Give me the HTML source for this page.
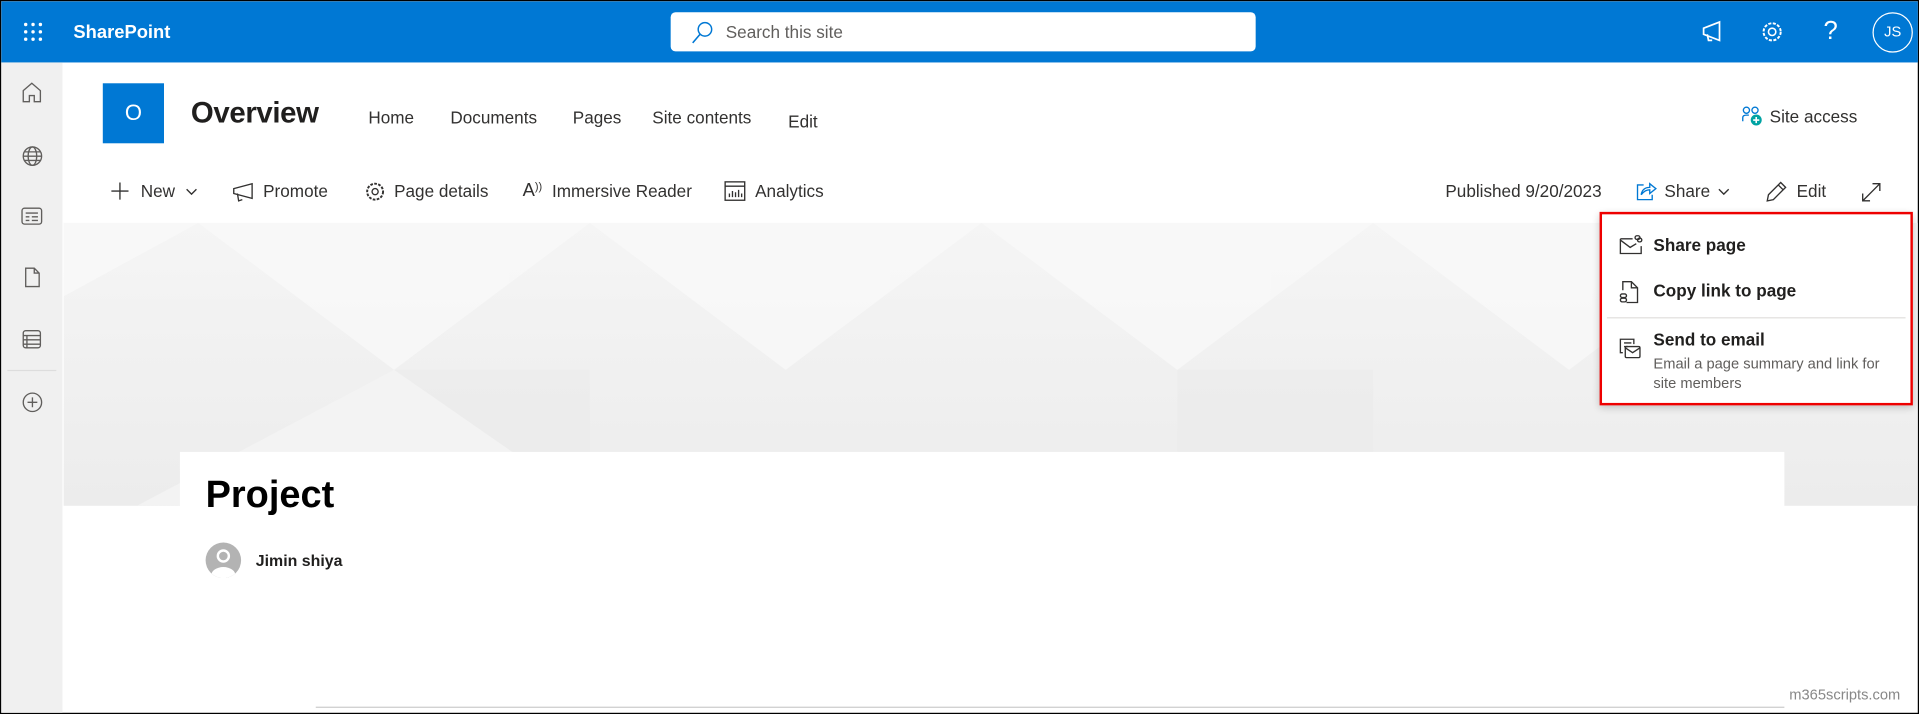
<!DOCTYPE html>
<html><head><meta charset="utf-8"><style>
*{margin:0;padding:0;box-sizing:border-box}
html,body{width:1919px;height:714px;overflow:hidden;background:#000}
#w{position:absolute;left:0;top:0;width:1568px;height:583px;transform:scale(1.22385,1.2247);transform-origin:0 0;background:#fff;font-family:"Liberation Sans",sans-serif;color:#323130;overflow:hidden;border:1px solid #000}
.a{position:absolute;white-space:nowrap}
svg{position:absolute;overflow:visible}
.ic{fill:none;stroke:#323130;stroke-width:1.1}
.ri{fill:none;stroke:#605e5c;stroke-width:1.1}
</style></head><body><div id="w">
<div class="a" style="left:0;top:0;width:1568px;height:50px;background:#0078d4"></div>
<svg style="left:18px;top:17px" width="16" height="16"><g fill="#fff"><circle cx="2" cy="2" r="1.4"/><circle cx="8" cy="2" r="1.4"/><circle cx="14" cy="2" r="1.4"/><circle cx="2" cy="8" r="1.4"/><circle cx="8" cy="8" r="1.4"/><circle cx="14" cy="8" r="1.4"/><circle cx="2" cy="14" r="1.4"/><circle cx="8" cy="14" r="1.4"/><circle cx="14" cy="14" r="1.4"/></g></svg>
<div class="a" style="left:59px;top:17px;color:#fff;font-weight:bold;font-size:15px">SharePoint</div>
<div class="a" style="left:547px;top:9px;width:478px;height:32px;background:#fff;border-radius:4px"></div>
<svg style="left:564px;top:17px" width="18" height="18"><circle cx="11" cy="6" r="5.5" fill="none" stroke="#0078d4" stroke-width="1.2"/><path d="M7 10 L1 17" stroke="#0078d4" stroke-width="1.3"/></svg>
<div class="a" style="left:592px;top:17px;color:#605e5c;font-size:14px">Search this site</div>
<svg style="left:1389px;top:16px" width="20" height="18"><path d="M2 6 L15 1 L15 16 L2 11 Z M5 11 L6 16 L9 16" fill="none" stroke="#fff" stroke-width="1.4"/></svg>
<svg style="left:1438px;top:16px" width="18" height="18"><circle cx="9" cy="9" r="3" fill="none" stroke="#fff" stroke-width="1.3"/><circle cx="9" cy="9" r="7" fill="none" stroke="#fff" stroke-width="1.6" stroke-dasharray="2.5 1.2"/></svg>
<div class="a" style="left:1489px;top:13px;color:#fff;font-size:21px">?</div>
<div class="a" style="left:1529px;top:9px;width:33px;height:33px;border:1.3px solid #fff;border-radius:50%;color:#fff;font-size:12px;text-align:center;line-height:31px">JS</div>
<div class="a" style="left:0;top:50px;width:50px;height:533px;background:#f0f0f0"></div>
<svg style="left:17px;top:66px" width="16" height="17"><path class="ri" d="M1 7 L8 1 L15 7 L15 16 L10 16 L10 11 L6 11 L6 16 L1 16 Z"/></svg>
<svg style="left:17px;top:118px" width="17" height="17"><g class="ri"><circle cx="8.5" cy="8.5" r="7.5"/><ellipse cx="8.5" cy="8.5" rx="3.5" ry="7.5"/><path d="M1 8.5 H16 M2 5 H15 M2 12 H15"/></g></svg>
<svg style="left:16px;top:168px" width="18" height="15"><g class="ri"><rect x="1" y="1" width="16" height="13" rx="2"/><path d="M4 5 H14 M4 8 H7 M9 8 H14 M4 11 H7 M9 11 H14"/></g></svg>
<svg style="left:19px;top:217px" width="13" height="17"><path class="ri" d="M1 1 H8 L12 5 V16 H1 Z M8 1 V5 H12"/></svg>
<svg style="left:17px;top:268px" width="16" height="16"><g class="ri"><rect x="1" y="1" width="14" height="14" rx="2"/><path d="M1 5 H15 M1 8.5 H15 M1 12 H15 M4 5 V15"/></g></svg>
<div class="a" style="left:5px;top:301px;width:40px;height:1px;background:#ddd"></div>
<svg style="left:17px;top:319px" width="17" height="17"><g class="ri"><circle cx="8.5" cy="8.5" r="7.5"/><path d="M8.5 4.5 V12.5 M4.5 8.5 H12.5"/></g></svg>
<div class="a" style="left:83px;top:67px;width:50px;height:49px;background:#0078d4;color:#fff;font-size:18px;text-align:center;line-height:49px">O</div>
<div class="a" style="left:155px;top:78px;font-size:24px;color:#201f1e;font-weight:bold;letter-spacing:-0.3px">Overview</div>
<div class="a" style="left:300px;top:87px;font-size:14px">Home</div>
<div class="a" style="left:367px;top:87px;font-size:14px">Documents</div>
<div class="a" style="left:467px;top:87px;font-size:14px">Pages</div>
<div class="a" style="left:532px;top:87px;font-size:14px">Site contents</div>
<div class="a" style="left:643px;top:90px;font-size:14px">Edit</div>
<svg style="left:1422px;top:85px" width="18" height="17"><g fill="none" stroke="#0078d4" stroke-width="1.1"><circle cx="4" cy="4" r="2.5"/><circle cx="11" cy="4" r="2.5"/><path d="M1 13 V10 Q1 8 4 8 H6"/></g><circle cx="12" cy="12" r="4.5" fill="#00a3a3"/><path d="M12 9.5 V14.5 M9.5 12 H14.5" stroke="#fff" stroke-width="1.3"/></svg>
<div class="a" style="left:1445px;top:86px;font-size:14px">Site access</div>
<svg style="left:90px;top:148px" width="14" height="14"><path d="M7 0 V14 M0 7 H14" stroke="#323130" stroke-width="1.1"/></svg>
<div class="a" style="left:114px;top:147px;font-size:14px">New</div>
<svg style="left:151px;top:153px" width="9" height="5"><path d="M0.5 0.5 L4.5 4.5 L8.5 0.5" class="ic"/></svg>
<svg style="left:189px;top:148px" width="18" height="16"><path class="ic" d="M1 5 L16 1 V13 L1 9 Z M4 9 L5 15 L8 14"/></svg>
<div class="a" style="left:214px;top:147px;font-size:14px">Promote</div>
<svg style="left:297px;top:147px" width="17" height="17"><circle cx="8.5" cy="8.5" r="2.5" class="ic"/><circle cx="8.5" cy="8.5" r="6.5" fill="none" stroke="#323130" stroke-width="1.6" stroke-dasharray="2.2 1.1"/></svg>
<div class="a" style="left:321px;top:147px;font-size:14px">Page details</div>
<div class="a" style="left:426px;top:146px;font-size:15px">A<span style="font-size:9px;vertical-align:top">))</span></div>
<div class="a" style="left:450px;top:147px;font-size:14px">Immersive Reader</div>
<svg style="left:591px;top:147px" width="17" height="16"><g class="ic"><rect x="0.5" y="0.5" width="16" height="15"/><path d="M0.5 4 H16.5 M4 13 V10 M6.5 13 V8 M9 13 V9 M11.5 13 V7 M14 13 V10"/></g></svg>
<div class="a" style="left:616px;top:147px;font-size:14px">Analytics</div>
<div class="a" style="left:1180px;top:147px;font-size:14px">Published 9/20/2023</div>
<svg style="left:1335px;top:147px" width="18" height="17"><g fill="none" stroke="#0078d4" stroke-width="1.1"><path d="M7 3 H2 V15 H14 V11"/><path d="M5 11 Q6 5 12 5 V2 L17 6 L12 10 V7 Q8 7 5 11 Z"/></g></svg>
<div class="a" style="left:1359px;top:147px;font-size:14px">Share</div>
<svg style="left:1403px;top:153px" width="9" height="5"><path d="M0.5 0.5 L4.5 4.5 L8.5 0.5" class="ic"/></svg>
<svg style="left:1442px;top:147px" width="17" height="17"><path class="ic" d="M1 16 L2 11 L12 1 L16 5 L6 15 Z M10 3 L14 7"/></svg>
<div class="a" style="left:1467px;top:147px;font-size:14px">Edit</div>
<svg style="left:1520px;top:148px" width="16" height="16"><path class="ic" d="M1 15 L15 1 M9 1 H15 V7 M1 9 V15 H7"/></svg>
<div class="a" style="left:51px;top:181px;width:1517px;height:231px;background:linear-gradient(180deg,#f5f5f5,#ececec);overflow:hidden">
<svg style="left:0;top:0" width="1517" height="231"><g fill="#fafafa" opacity="0.7"><path d="M0 0 L0 60 L110 0 Z"/><path d="M110 0 L270 120 L430 0 Z"/><path d="M430 0 L590 120 L750 0 Z"/><path d="M750 0 L910 120 L1070 0 Z"/><path d="M1070 0 L1230 120 L1390 0 Z"/></g><g fill="#e9e9e9" opacity="0.4"><rect x="270" y="120" width="160" height="111"/><rect x="910" y="120" width="160" height="111"/></g><path d="M60 231 L270 120 L430 231 Z" fill="#f3f3f3"/></svg>
</div>
<div class="a" style="left:146px;top:368px;width:1311px;height:60px;background:#fff"></div>
<div class="a" style="left:167px;top:385px;font-size:31px;font-weight:bold;color:#000">Project</div>
<svg style="left:167px;top:442px" width="29" height="29"><defs><clipPath id="c"><circle cx="14.5" cy="14.5" r="14.5"/></clipPath></defs><circle cx="14.5" cy="14.5" r="14.5" fill="#b3b3b3"/><g clip-path="url(#c)" fill="#fff"><circle cx="14.5" cy="11" r="5.5"/><ellipse cx="14.5" cy="27" rx="10" ry="7"/></g><circle cx="14.5" cy="11" r="3.5" fill="#b3b3b3"/></svg>
<div class="a" style="left:208px;top:449px;font-size:13px;font-weight:bold;color:#201f1e">Jimin shiya</div>
<div class="a" style="left:257px;top:576px;width:1200px;height:1px;background:#ccc"></div>
<div class="a" style="left:1461px;top:559px;font-size:12px;color:#888">m365scripts.com</div>
<div class="a" style="left:1306px;top:172px;width:256px;height:158px;background:#fff;border:2px solid #e00;box-shadow:0 2px 6px rgba(0,0,0,.2)"></div>
<svg style="left:1322px;top:191px" width="19" height="16"><g class="ic"><path d="M1 3 H11 M1 3 V15 H18 V9 M1 4 L9 10 L14 7"/><rect x="13" y="0.5" width="4" height="3" rx="1.5"/><rect x="15" y="2.5" width="3.5" height="3" rx="1.5"/></g></svg>
<div class="a" style="left:1350px;top:191px;font-size:14px;font-weight:bold;color:#201f1e">Share page</div>
<svg style="left:1322px;top:228px" width="17" height="19"><g class="ic"><path d="M3 8 V1 H10 L15 6 V18 H6 M10 1 V6 H15"/><rect x="1" y="11" width="5" height="3" rx="1.5"/><rect x="1" y="14.5" width="5" height="3" rx="1.5"/></g></svg>
<div class="a" style="left:1350px;top:228px;font-size:14px;font-weight:bold;color:#201f1e">Copy link to page</div>
<div class="a" style="left:1312px;top:258px;width:244px;height:1px;background:#e1dfdd"></div>
<svg style="left:1322px;top:275px" width="18" height="17"><g class="ic"><path d="M3 12 H1 V1 H12 V5"/><path d="M4 4 H10 M4 7 H7"/><rect x="5" y="7" width="12" height="9" rx="1"/><path d="M5 8 L11 12 L17 8"/></g></svg>
<div class="a" style="left:1350px;top:268px;font-size:14px;font-weight:bold;color:#201f1e">Send to email</div>
<div class="a" style="left:1350px;top:288px;font-size:12px;color:#605e5c;line-height:16px;white-space:normal;width:200px">Email a page summary and link for site members</div>
</div></body></html>
